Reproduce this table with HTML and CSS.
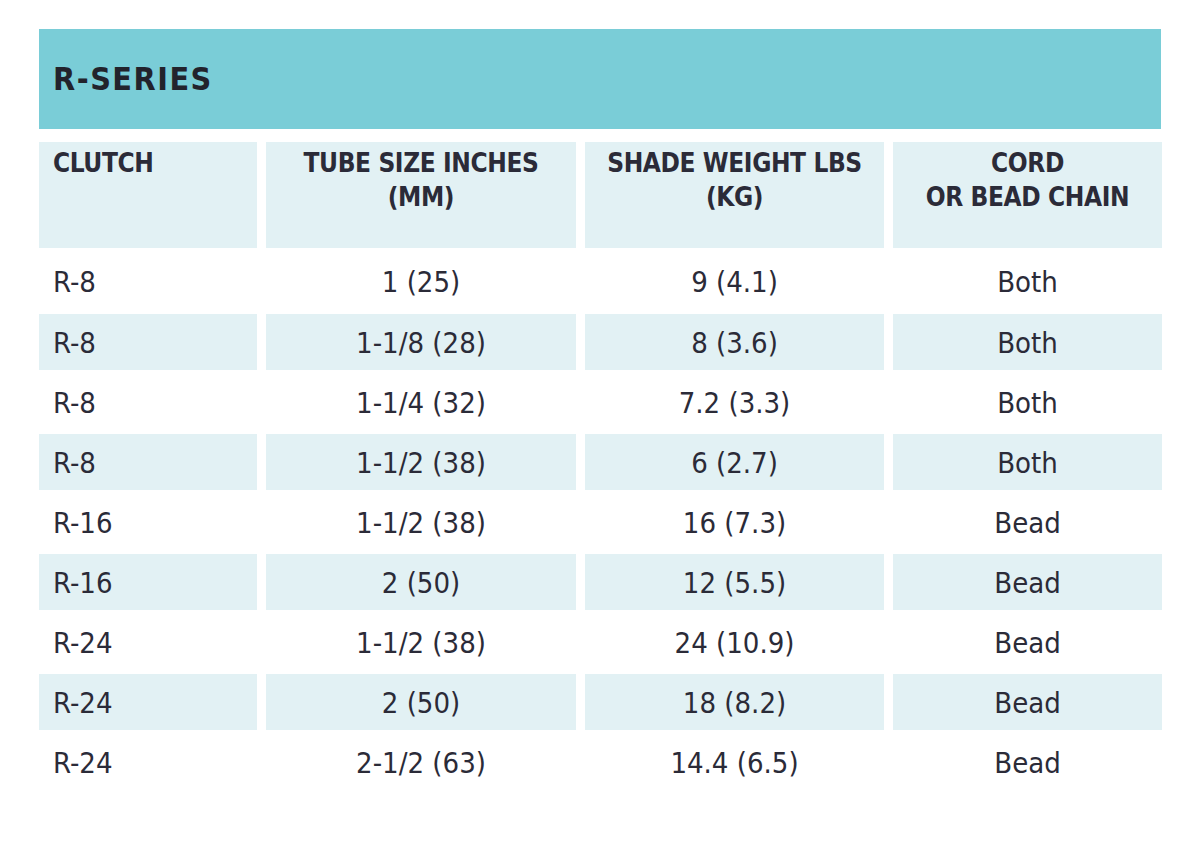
FILE: index.html
```html
<!DOCTYPE html>
<html>
<head>
<meta charset="utf-8">
<link rel="stylesheet" href="styles.css">
</head>
<body>
<div class="table">
  <div class="title">R-SERIES</div>
  <div class="row head">
    <div class="cell first">CLUTCH</div>
    <div class="cell">TUBE SIZE INCHES<br>(MM)</div>
    <div class="cell">SHADE WEIGHT LBS<br>(KG)</div>
    <div class="cell">CORD<br>OR BEAD CHAIN</div>
  </div>
  <div class="row">
    <div class="cell first">R-8</div><div class="cell">1 (25)</div><div class="cell">9 (4.1)</div><div class="cell">Both</div>
  </div>
  <div class="row shade">
    <div class="cell first">R-8</div><div class="cell">1-1/8 (28)</div><div class="cell">8 (3.6)</div><div class="cell">Both</div>
  </div>
  <div class="row">
    <div class="cell first">R-8</div><div class="cell">1-1/4 (32)</div><div class="cell">7.2 (3.3)</div><div class="cell">Both</div>
  </div>
  <div class="row shade">
    <div class="cell first">R-8</div><div class="cell">1-1/2 (38)</div><div class="cell">6 (2.7)</div><div class="cell">Both</div>
  </div>
  <div class="row">
    <div class="cell first">R-16</div><div class="cell">1-1/2 (38)</div><div class="cell">16 (7.3)</div><div class="cell">Bead</div>
  </div>
  <div class="row shade">
    <div class="cell first">R-16</div><div class="cell">2 (50)</div><div class="cell">12 (5.5)</div><div class="cell">Bead</div>
  </div>
  <div class="row">
    <div class="cell first">R-24</div><div class="cell">1-1/2 (38)</div><div class="cell">24 (10.9)</div><div class="cell">Bead</div>
  </div>
  <div class="row shade">
    <div class="cell first">R-24</div><div class="cell">2 (50)</div><div class="cell">18 (8.2)</div><div class="cell">Bead</div>
  </div>
  <div class="row">
    <div class="cell first">R-24</div><div class="cell">2-1/2 (63)</div><div class="cell">14.4 (6.5)</div><div class="cell">Bead</div>
  </div>
</div>
</body>
</html>
```
FILE: styles.css
```css
html, body {
  margin: 0;
  padding: 0;
  background: #ffffff;
}
body {
  font-family: "DejaVu Sans Condensed", "DejaVu Sans", sans-serif;
  color: #2b2b38;
}
.table {
  width: 1122px;
  margin: 29px 0 0 39px;
  display: flex;
  flex-direction: column;
}
.title {
  height: 100px;
  background: #7acdd7;
  font-weight: bold;
  font-size: 32px;
  letter-spacing: 1.5px;
  padding-left: 14px;
  display: flex;
  align-items: center;
  box-sizing: border-box;
  color: #22232c;
  margin-bottom: 13px;
}
.row {
  display: grid;
  grid-template-columns: 218px 310px 299px 269px;
  column-gap: 9px;
  height: 64px;
  font-size: 29px;
}
.row.shade {
  height: 56px;
}
.row:nth-child(3) {
  height: 66px;
}
.row.shade .cell, .row.head .cell {
  background: #e2f1f4;
}
.cell {
  display: flex;
  align-items: center;
  justify-content: center;
  text-align: center;
  padding-top: 2px;
}
.cell.first {
  justify-content: flex-start;
  padding-left: 14px;
}
.row.head {
  height: 106px;
  font-size: 26px;
  font-weight: bold;
  line-height: 34px;
  letter-spacing: -0.4px;
}
.row.head .cell {
  align-items: flex-start;
  padding-top: 4px;
}
```
